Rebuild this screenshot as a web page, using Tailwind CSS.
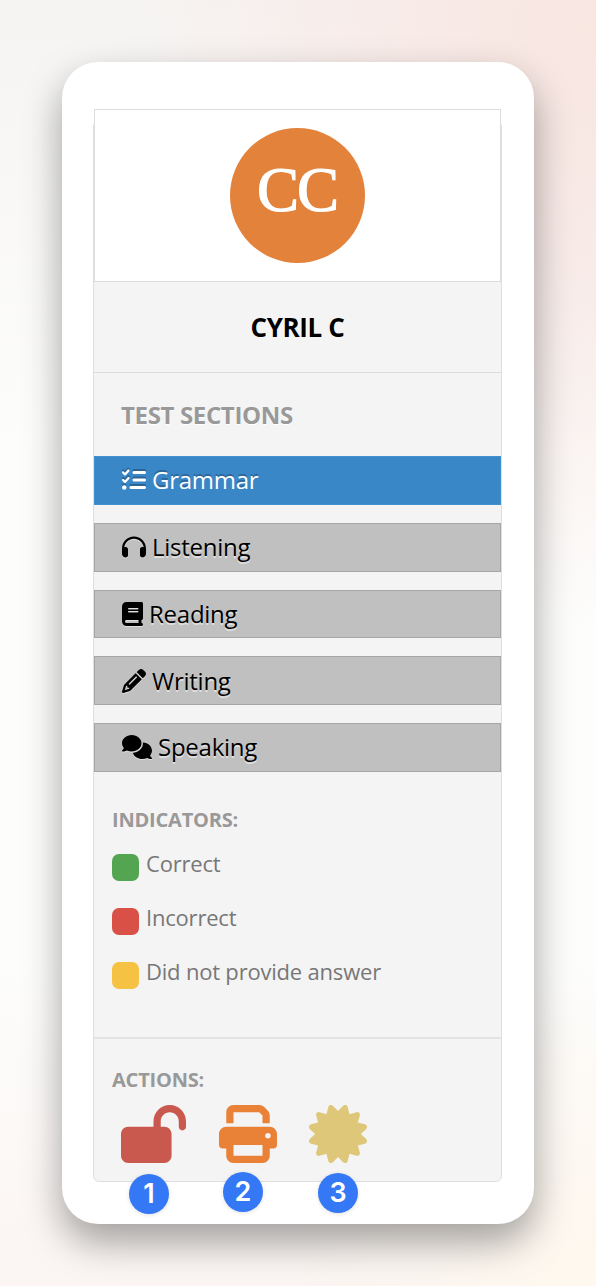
<!DOCTYPE html>
<html lang="en">
<head>
  <meta charset="UTF-8">
  <title>Test Review</title>
  <script src="https://cdn.jsdelivr.net/npm/@tailwindcss/browser@4"></script>
</head>
<body class="w-[596px] h-[1286px] overflow-hidden font-['Open_Sans',sans-serif] bg-[#fbfaf7] bg-[radial-gradient(ellipse_480px_600px_at_100%_2%,#f8e6e1_0%,#f8ebe8_40%,#f8ebe800_100%),radial-gradient(ellipse_300px_300px_at_100%_100%,#fef8ee_0%,#fef8ee00_100%),linear-gradient(180deg,#f5f4f3_0%,#fdfdfc_35%,#fdfdfc_75%,#fbf5f3_100%)] px-[62px] pt-[62px]">
  <div class="h-[1162px] rounded-[36px] bg-white px-[31px] pt-[47px] shadow-[0_18px_38px_rgba(0,0,0,0.36)]">
    <div class="relative w-[409px] h-[1073px]">
      <!-- panel frame, starts a bit below the avatar box -->
      <div class="absolute inset-x-0 top-3 bottom-0 bg-[#f4f4f4] border border-[#dfdfdf] rounded-[6px]"></div>

      <div class="relative flex flex-col px-px">
        <div class="h-[173px] bg-white border border-[#dcdcdc] flex justify-center pt-[18px]">
          <div class="w-[135px] h-[135px] rounded-full bg-[#e3823b] flex justify-center">
            <span class="font-['Liberation_Serif',serif] text-white text-[63px] leading-[125px] tracking-[-2px] pr-px [-webkit-text-stroke:1.2px_#fff]">CC</span>
          </div>
        </div>

        <div class="h-[91px] border-b border-[#dcdcdc] flex items-center justify-center">
          <h1 class="text-[26px] tracking-[-0.4px] font-bold text-black">CYRIL C</h1>
        </div>

        <h2 class="h-[83px] leading-[84px] pl-[27px] text-[24px] tracking-[-0.35px] font-bold text-[#999] [text-shadow:0_1px_0_#fff]">TEST SECTIONS</h2>

        <nav class="flex flex-col gap-[18px] text-[24px] tracking-[-0.25px] leading-[45px] text-black">
          <a class="h-[49px] flex items-start gap-[6px] pl-[27px] border border-[#4191d1] bg-[#3a87c8] text-white [text-shadow:0_-2px_0_rgba(0,0,0,0.25)]">
            <svg class="w-6 h-6 mt-[11px] drop-shadow-[0_-2px_0_rgba(0,0,0,0.25)]" viewBox="0 0 512 512" fill="currentColor"><path d="M152.100 38.200c9.900 8.900 10.700 24 1.800 33.900l-72 80c-4.400 4.900-10.600 7.800-17.200 7.900s-12.900-2.400-17.600-7L7 113C-2.300 103.600-2.300 88.400 7 79s24.600-9.400 33.900 0l22.100 22.100 55.100-61.200c8.900-9.900 24-10.700 33.900-1.800zm0 160c9.900 8.900 10.700 24 1.800 33.900l-72 80c-4.400 4.900-10.600 7.800-17.200 7.900s-12.900-2.400-17.600-7L7 273c-9.400-9.400-9.400-24.600 0-33.900s24.600-9.400 33.900 0l22.100 22.100 55.100-61.200c8.900-9.900 24-10.700 33.900-1.800zM224 96c0-17.700 14.300-32 32-32H480c17.700 0 32 14.300 32 32s-14.300 32-32 32H256c-17.700 0-32-14.300-32-32zm0 160c0-17.700 14.300-32 32-32H480c17.700 0 32 14.300 32 32s-14.300 32-32 32H256c-17.700 0-32-14.300-32-32zM160 416c0-17.700 14.300-32 32-32H480c17.700 0 32 14.300 32 32s-14.300 32-32 32H192c-17.700 0-32-14.300-32-32zM48 368a48 48 0 1 1 0 96 48 48 0 1 1 0-96z"/></svg>
            <span>Grammar</span>
          </a>
          <a class="h-[49px] flex items-start gap-[6px] pl-[27px] border border-[#a6a6a6] bg-[#c0c0c0] [text-shadow:0_2px_0_rgba(255,255,255,0.5)]">
            <svg class="w-6 h-6 mt-[11px] drop-shadow-[0_1px_0_rgba(255,255,255,0.5)]" viewBox="0 0 512 512" fill="currentColor"><path d="M256 80C149.900 80 62.400 159.400 49.600 262c9.400-3.800 19.600-6 30.400-6c26.500 0 48 21.500 48 48V432c0 26.500-21.500 48-48 48c-44.200 0-80-35.800-80-80V288C0 146.600 114.600 32 256 32s256 114.600 256 256v112c0 44.200-35.800 80-80 80c-26.500 0-48-21.500-48-48V304c0-26.500 21.500-48 48-48c10.800 0 21 2.100 30.400 6C449.600 159.400 362.100 80 256 80z"/></svg>
            <span>Listening</span>
          </a>
          <a class="h-[48px] flex items-start gap-[6px] pl-[27px] border border-[#a6a6a6] bg-[#c0c0c0] [text-shadow:0_2px_0_rgba(255,255,255,0.5)]">
            <svg class="w-[21px] h-6 mt-[11px] drop-shadow-[0_1px_0_rgba(255,255,255,0.5)]" viewBox="0 0 448 512" fill="currentColor"><path d="M96 0C43 0 0 43 0 96V416c0 53 43 96 96 96H384h32c17.700 0 32-14.300 32-32s-14.300-32-32-32V384c17.700 0 32-14.300 32-32V32c0-17.700-14.300-32-32-32H384 96zm0 384H352v64H96c-17.700 0-32-14.300-32-32s14.300-32 32-32zm32-240c0-8.800 7.200-16 16-16H336c8.800 0 16 7.200 16 16s-7.200 16-16 16H144c-8.800 0-16-7.200-16-16zm16 48H336c8.800 0 16 7.200 16 16s-7.200 16-16 16H144c-8.800 0-16-7.200-16-16s7.200-16 16-16z"/></svg>
            <span>Reading</span>
          </a>
          <a class="h-[49px] flex items-start gap-[6px] pl-[27px] border border-[#a6a6a6] bg-[#c0c0c0] [text-shadow:0_2px_0_rgba(255,255,255,0.5)]">
            <svg class="w-6 h-6 mt-3 drop-shadow-[0_1px_0_rgba(255,255,255,0.5)]" viewBox="0 0 512 512" fill="currentColor"><path d="M410.300 231l11.300-11.300-33.900-33.900-62.100-62.100L291.700 89.800l-11.300 11.300-22.600 22.600L58.600 322.900c-10.400 10.400-18 23.300-22.200 37.400L1 480.700c-2.500 8.400-.2 17.500 6.100 23.700s15.300 8.500 23.700 6.100l120.300-35.400c14.100-4.200 27-11.800 37.400-22.200L387.700 253.700 410.300 231zM160 399.400l-9.100 22.700c-4 3.100-8.500 5.400-13.300 6.900L59.400 452l23-78.100c1.400-4.900 3.800-9.400 6.900-13.300l22.700-9.100v32c0 8.800 7.200 16 16 16h32zM362.700 18.700L348.300 33.200 325.700 55.800 314.300 67.100l33.900 33.900 62.100 62.100 33.900 33.900 11.300-11.300 22.600-22.600 14.500-14.500c25-25 25-65.500 0-90.500L453.300 18.700c-25-25-65.500-25-90.500 0zm-47.400 168l-144 144c-6.200 6.200-16.400 6.200-22.600 0s-6.200-16.400 0-22.600l144-144c6.200-6.200 16.400-6.200 22.600 0s6.200 16.400 0 22.600z"/></svg>
            <span class="leading-[47px]">Writing</span>
          </a>
          <a class="h-[49px] flex items-start gap-[6px] pl-[27px] border border-[#a6a6a6] bg-[#c0c0c0] [text-shadow:0_2px_0_rgba(255,255,255,0.5)]">
            <svg class="w-[30px] h-6 mt-[11px] drop-shadow-[0_1px_0_rgba(255,255,255,0.5)]" viewBox="0 0 640 512" fill="currentColor"><path d="M208 352c114.900 0 208-78.800 208-176S322.900 0 208 0S0 78.800 0 176c0 38.600 14.700 74.300 39.600 103.400c-3.500 9.400-8.700 17.700-14.200 24.700c-4.800 6.200-9.700 11-13.300 14.300c-1.800 1.600-3.300 2.900-4.300 3.700c-.5 .4-.9 .7-1.100 .8l-.2 .2C1 327.200-1.400 334.400 .8 340.900S9.100 352 16 352c21.800 0 43.800-5.600 62.100-12.500c9.200-3.500 17.800-7.400 25.200-11.400C134.100 343.300 169.800 352 208 352zM448 176c0 112.300-99.100 196.900-216.500 207C255.800 457.400 336.400 512 432 512c38.200 0 73.900-8.700 104.700-23.900c7.500 4 16 7.900 25.200 11.400c18.300 6.900 40.300 12.500 62.100 12.500c6.900 0 13.100-4.500 15.200-11.100c2.100-6.600-.2-13.800-5.800-17.900l-.2-.2c-.2-.2-.6-.4-1.100-.8c-1-.8-2.500-2-4.300-3.700c-3.600-3.300-8.500-8.100-13.300-14.300c-5.500-7-10.700-15.400-14.200-24.700c24.900-29 39.600-64.700 39.600-103.400c0-92.800-84.900-168.900-192.600-175.500c.4 5.100 .6 10.300 .6 15.500z"/></svg>
            <span>Speaking</span>
          </a>
        </nav>

        <section class="h-[267px] border-b-2 border-[#e3e3e3] pl-[18px] pt-[34px] text-[22px] tracking-[-0.2px] text-[#777]">
          <h3 class="text-[20px] leading-[28px] font-bold text-[#999]">INDICATORS:</h3>
          <ul class="flex flex-col gap-[26px] pt-[15px] leading-[28px]">
            <li class="h-7 flex items-start gap-[7px]"><span class="w-[27px] h-[27px] mt-[5px] rounded-[7px] bg-[#53a551]"></span><span>Correct</span></li>
            <li class="h-7 flex items-start gap-[7px]"><span class="w-[27px] h-[27px] mt-[5px] rounded-[7px] bg-[#d95047]"></span><span>Incorrect</span></li>
            <li class="h-7 flex items-start gap-[7px]"><span class="w-[27px] h-[27px] mt-[5px] rounded-[7px] bg-[#f6c244]"></span><span>Did not provide answer</span></li>
          </ul>
        </section>

        <section class="pl-[18px] pt-[27px]">
          <h3 class="text-[20px] tracking-[-0.2px] leading-[28px] font-bold text-[#999]">ACTIONS:</h3>
          <div class="flex items-start pl-[9px] pt-[11px]">
            <svg class="w-[65px] h-[58px] text-[#c9594e]" viewBox="0 0 576 512" fill="currentColor"><path d="M352 144c0-44.200 35.800-80 80-80s80 35.800 80 80v48c0 17.700 14.300 32 32 32s32-14.300 32-32V144C576 64.500 511.500 0 432 0S288 64.500 288 144v48H64c-35.300 0-64 28.700-64 64V448c0 35.300 28.700 64 64 64H384c35.300 0 64-28.700 64-64V256c0-35.300-28.700-64-64-64H352V144z"/></svg>
            <svg class="w-[58px] h-[58px] ml-[33px] text-[#e98136]" viewBox="0 0 512 512" fill="currentColor"><path d="M128 0C92.700 0 64 28.700 64 64v96h64V64H354.700L384 93.300V160h64V93.300c0-17-6.700-33.300-18.700-45.300L400 18.700C388 6.700 371.700 0 354.700 0H128zM384 352v32 64H128V384 368 352H384zm64 32h32c17.700 0 32-14.300 32-32V256c0-35.300-28.700-64-64-64H64c-35.300 0-64 28.700-64 64v96c0 17.700 14.300 32 32 32H64v64c0 35.300 28.700 64 64 64H384c35.300 0 64-28.700 64-64V384zM432 248a24 24 0 1 1 0 48 24 24 0 1 1 0-48z"/></svg>
            <svg class="w-[58px] h-[58px] ml-[32px] text-[#dec779]" viewBox="0 0 512 512" fill="currentColor"><path d="M211 7.300C205 1 196-1.400 187.600 .8s-14.900 8.900-17.100 17.300L154.700 80.600l-62-17.500c-8.400-2.400-17.400 0-23.500 6.100s-8.500 15.100-6.100 23.500l17.500 62L18.100 170.600c-8.400 2.100-15 8.700-17.300 17.100S1 205 7.300 211l46.200 45L7.300 301C1 307-1.400 316 .8 324.400s8.900 14.900 17.300 17.100l62.500 15.800-17.500 62c-2.400 8.400 0 17.400 6.100 23.500s15.100 8.500 23.500 6.100l62-17.500 15.800 62.500c2.100 8.400 8.700 15 17.100 17.300s17.300-.2 23.400-6.400l45-46.200 45 46.200c6.100 6.200 15 8.700 23.400 6.400s14.900-8.900 17.100-17.300l15.800-62.500 62 17.500c8.400 2.400 17.400 0 23.500-6.100s8.500-15.100 6.100-23.500l-17.500-62 62.500-15.800c8.400-2.100 15-8.700 17.300-17.100s-.2-17.400-6.400-23.400l-46.200-45 46.200-45c6.200-6.100 8.700-15 6.400-23.400s-8.900-14.900-17.300-17.100l-62.500-15.800 17.500-62c2.400-8.400 0-17.400-6.100-23.500s-15.100-8.500-23.500-6.100l-62 17.500L341.400 18.100c-2.100-8.400-8.700-15-17.100-17.300S307 1 301 7.300L256 53.500 211 7.300z"/></svg>
          </div>
        </section>
      </div>

      <!-- numbered callouts over the panel edge -->
      <div class="absolute left-[36px] top-[1065px] w-10 h-10 rounded-full bg-[#3478f6] text-white text-center font-[Inter,sans-serif] font-semibold text-[27px] leading-10 shadow-[0_1px_4px_rgba(0,0,0,0.12)]">1</div>
      <div class="absolute left-[130px] top-[1063px] w-10 h-10 rounded-full bg-[#3478f6] text-white text-center font-[Inter,sans-serif] font-semibold text-[27px] leading-10 shadow-[0_1px_4px_rgba(0,0,0,0.12)]">2</div>
      <div class="absolute left-[225px] top-[1064px] w-10 h-10 rounded-full bg-[#3478f6] text-white text-center font-[Inter,sans-serif] font-semibold text-[27px] leading-10 shadow-[0_1px_4px_rgba(0,0,0,0.12)]">3</div>
    </div>
  </div>
</body>
</html>
